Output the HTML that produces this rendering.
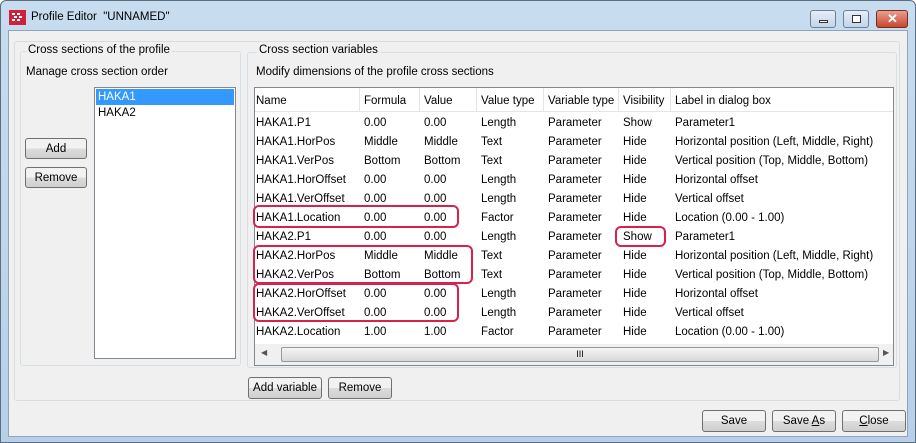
<!DOCTYPE html>
<html><head><style>
*{box-sizing:border-box}
body{margin:0;width:916px;height:443px;overflow:hidden;font-family:"Liberation Sans",sans-serif;font-size:11.5px;color:#000;background:#fff}
.win{position:absolute;left:0;top:0;width:916px;height:443px;background:linear-gradient(#c8dcef,#b7d0e8);border:1px solid #5a6e84;border-radius:6px 6px 0 0}
.client{position:absolute;left:8px;top:30px;width:900px;height:407px;background:#f0f0f0;border:1px solid #8ea4bb}
.a{position:absolute}
.grp{position:absolute;border:1px solid #d5dfe5;border-radius:3px}
.lbl{position:absolute;background:#f0f0f0;padding:0 2px;white-space:nowrap}
.btn{position:absolute;border:1px solid #707070;border-radius:3px;background:linear-gradient(#f2f2f2 50%,#dddddd 50%,#cfcfcf);text-align:center;line-height:20px}
.t{white-space:nowrap;position:absolute}
.red{position:absolute;border:2px solid #d8224a;border-radius:6px}
.tb{position:absolute;width:26px;height:18px;top:9px;border:1px solid #6d7f95;border-radius:3px;background:linear-gradient(#e6eef8,#c2d3e8)}
</style></head><body>
<div class="win">
<svg class="a" style="left:8px;top:9px" width="17" height="15"><rect width="17" height="15" fill="#d0203a"/><g fill="#fff"><rect x="3" y="3" width="3" height="2"/><rect x="8" y="3" width="3" height="2"/><rect x="5" y="6" width="3" height="2"/><rect x="10" y="6" width="3" height="2"/><rect x="3" y="9" width="3" height="2"/><rect x="8" y="9" width="3" height="2"/></g></svg>
<div class="t" style="left:30px;top:10px">Profile Editor&nbsp; "UNNAMED"</div>
<div class="tb" style="left:809px"><div class="a" style="left:8px;top:9px;width:9px;height:3px;background:#fff;border:1px solid #333"></div></div>
<div class="tb" style="left:842px"><div class="a" style="left:8px;top:4px;width:9px;height:8px;border:1px solid #333;background:#fff"></div></div>
<div class="tb" style="left:875px;width:32px;background:linear-gradient(#e8a090,#c8452d);border-color:#7a2a20"><div class="a" style="left:10px;top:0;color:#fff;font-weight:bold;font-size:13px">✕</div></div>
</div>
<div class="client">
<div class="grp" style="left:5px;top:10px;width:886px;height:360px;border-color:#dcdcdc"></div>
<div class="grp" style="left:11px;top:20px;width:221px;height:315px"></div>
<div class="lbl" style="left:17px;top:13px">Cross sections of the profile</div>
<div class="t" style="left:17px;top:35px">Manage cross section order</div>
<div class="a" style="left:85px;top:56px;width:142px;height:272px;background:#fff;border:1px solid #828790">
<div class="a" style="left:1px;top:1px;width:138px;height:16px;line-height:16px;background:#3399ff;color:#fff;padding-left:2px">HAKA1</div>
<div class="a" style="left:3px;top:17px;line-height:16px">HAKA2</div></div>
<div class="btn" style="left:16px;top:107px;width:62px;height:21px">Add</div>
<div class="btn" style="left:16px;top:136px;width:62px;height:21px">Remove</div>
<div class="grp" style="left:238px;top:21px;width:650px;height:316px"></div>
<div class="lbl" style="left:248px;top:13px">Cross section variables</div>
<div class="t" style="left:247px;top:35px">Modify dimensions of the profile cross sections</div>
<div class="a" style="left:245px;top:56px;width:640px;height:279px;background:#fff;border:1px solid #828790;overflow:hidden">
<div class="a" style="left:0;top:0;width:640px;height:24px;border-bottom:1px solid #e5e5e5;background:#fff"></div>
<div id="tbl"></div>
<div class="a" style="left:0;top:256px;width:638px;height:21px;background:#f0f0f0"><div class="a" style="left:26px;top:3px;width:598px;height:15px;border:1px solid #999;border-radius:2px;background:linear-gradient(#f4f4f4,#d8d8d8);text-align:center;font-size:9px;line-height:13px">III</div><div class="t" style="left:6px;top:4px;font-size:8px;color:#555">◀</div><div class="t" style="left:628px;top:4px;font-size:8px;color:#555">▶</div></div>
</div>
<div class="btn" style="left:239px;top:346px;width:74px;height:22px">Add variable</div>
<div class="btn" style="left:319px;top:346px;width:64px;height:22px">Remove</div>
<div class="btn" style="left:693px;top:379px;width:64px;height:22px">Save</div>
<div class="btn" style="left:763px;top:379px;width:64px;height:22px">Save <u>A</u>s</div>
<div class="btn" style="left:833px;top:379px;width:64px;height:22px"><u>C</u>lose</div>
</div>
<div class="red" style="left:253px;top:205px;width:206px;height:23px"></div>
<div class="red" style="left:615px;top:226px;width:51px;height:21px"></div>
<div class="red" style="left:253px;top:245px;width:220px;height:39px"></div>
<div class="red" style="left:253px;top:283px;width:206px;height:39px"></div>
<script>
var cols=[1,109,169,226,293,368,420],seps=[104,164,221,288,363,415];
var h=["Name","Formula","Value","Value type","Variable type","Visibility","Label in dialog box"];
var r=[["HAKA1.P1","0.00","0.00","Length","Parameter","Show","Parameter1"],
["HAKA1.HorPos","Middle","Middle","Text","Parameter","Hide","Horizontal position (Left, Middle, Right)"],
["HAKA1.VerPos","Bottom","Bottom","Text","Parameter","Hide","Vertical position (Top, Middle, Bottom)"],
["HAKA1.HorOffset","0.00","0.00","Length","Parameter","Hide","Horizontal offset"],
["HAKA1.VerOffset","0.00","0.00","Length","Parameter","Hide","Vertical offset"],
["HAKA1.Location","0.00","0.00","Factor","Parameter","Hide","Location (0.00 - 1.00)"],
["HAKA2.P1","0.00","0.00","Length","Parameter","Show","Parameter1"],
["HAKA2.HorPos","Middle","Middle","Text","Parameter","Hide","Horizontal position (Left, Middle, Right)"],
["HAKA2.VerPos","Bottom","Bottom","Text","Parameter","Hide","Vertical position (Top, Middle, Bottom)"],
["HAKA2.HorOffset","0.00","0.00","Length","Parameter","Hide","Horizontal offset"],
["HAKA2.VerOffset","0.00","0.00","Length","Parameter","Hide","Vertical offset"],
["HAKA2.Location","1.00","1.00","Factor","Parameter","Hide","Location (0.00 - 1.00)"]];
var s="";
for(var i=0;i<7;i++)s+='<div class="t" style="left:'+cols[i]+'px;top:7px">'+h[i]+'</div>';
for(i=0;i<6;i++)s+='<div class="a" style="left:'+seps[i]+'px;top:0;width:1px;height:24px;background:#e5e5e5"></div>';
for(var j=0;j<r.length;j++)for(i=0;i<7;i++)s+='<div class="t" style="left:'+cols[i]+'px;top:'+(29+j*19)+'px">'+r[j][i]+'</div>';
document.getElementById("tbl").innerHTML=s;
</script>
</body></html>
